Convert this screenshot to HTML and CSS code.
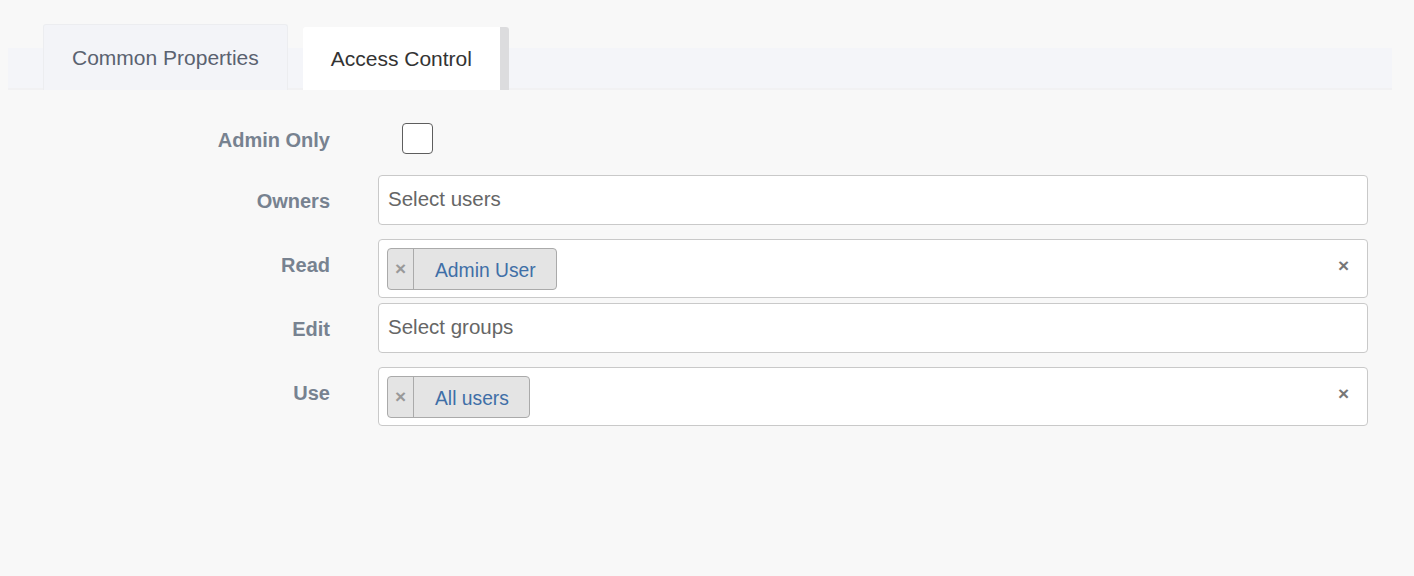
FILE: index.html
```html
<!DOCTYPE html>
<html lang="en">
<head>
<meta charset="utf-8">
<title>Access Control</title>
<link rel="stylesheet" href="styles.css">
</head>
<body>
<div class="page">
  <nav class="tabs">
    <a class="tab">Common Properties</a>
    <a class="tab tab-active">Access Control</a>
  </nav>

  <form class="form">
    <div class="row row-check">
      <label class="label">Admin Only</label>
      <div class="field"><span class="checkbox"></span></div>
    </div>

    <div class="row">
      <label class="label">Owners</label>
      <div class="field"><div class="select"><span class="placeholder">Select users</span></div></div>
    </div>

    <div class="row">
      <label class="label">Read</label>
      <div class="field">
        <div class="select select-multi">
          <span class="tag"><span class="tag-remove">×</span><span class="tag-text">Admin User</span></span>
          <span class="clear">×</span>
        </div>
      </div>
    </div>

    <div class="row">
      <label class="label">Edit</label>
      <div class="field"><div class="select"><span class="placeholder">Select groups</span></div></div>
    </div>

    <div class="row">
      <label class="label">Use</label>
      <div class="field">
        <div class="select select-multi">
          <span class="tag"><span class="tag-remove">×</span><span class="tag-text">All users</span></span>
          <span class="clear">×</span>
        </div>
      </div>
    </div>
  </form>
</div>
</body>
</html>
```

FILE: styles.css
```css
html, body {
  margin: 0;
  padding: 0;
  background: #f8f8f8;
  font-family: "Liberation Sans", Arial, Helvetica, sans-serif;
}

.page {
  width: 1414px;
  height: 576px;
}

/* tab strip */
.tabs {
  display: flex;
  align-items: flex-end;
  gap: 15px;
  margin: 0 22px 0 8px;
  padding: 24px 0 0 35px;
  height: 66px;
  background: linear-gradient(to bottom, transparent 0, transparent 48px, #f4f5f9 48px, #f4f5f9 88px, #f1f1f3 88px);
}

.tab {
  display: flex;
  align-items: center;
  box-sizing: border-box;
  height: 66px;
  padding: 0 28px 0 28px;
  font-size: 21px;
  color: #5a6270;
  background: #f3f4f8;
  border: 1px solid #ecedf0;
  border-bottom: 0;
  border-radius: 3px 3px 0 0;
}

.tab-active {
  height: 63px;
  padding: 0 28px 0 28px;
  color: #333;
  background: #fff;
  border: 0;
  border-right: 9px solid #dcdcde;
  margin-right: -9px;
}

/* form rows */
.form {
  padding-top: 23px;
}

.row {
  display: grid;
  grid-template-columns: 330px 990px;
  column-gap: 48px;
  min-height: 64px;
  align-items: start;
}

.row-check {
  min-height: 54px;
  margin-bottom: 8px;
}

.label {
  display: block;
  text-align: right;
  font-size: 20px;
  font-weight: bold;
  color: #778290;
  line-height: 52px;
}

.row-check .label {
  line-height: 54px;
}

.checkbox {
  display: block;
  margin: 10px 0 0 24px;
  width: 29px;
  height: 29px;
  border: 1px solid #5e5e5e;
  border-radius: 4px;
  background: #fff;
}

.select {
  box-sizing: border-box;
  display: flex;
  align-items: center;
  height: 50px;
  padding: 0 9px;
  background: #fff;
  border: 1px solid #c9c9c9;
  border-radius: 4px;
}

.select-multi {
  height: 59px;
  padding: 0 8px;
}

.placeholder {
  font-size: 20.5px;
  color: #666;
  margin-top: -2px;
}

.tag {
  display: flex;
  align-items: stretch;
  box-sizing: border-box;
  height: 42px;
  background: #e4e4e4;
  border: 1px solid #aaa;
  border-radius: 4px;
}

.tag-remove {
  display: flex;
  align-items: center;
  justify-content: center;
  width: 25px;
  border-right: 1px solid #aaa;
  color: #999;
  font-size: 19px;
  font-weight: bold;
}

.tag-text {
  display: flex;
  align-items: center;
  padding: 5px 20px 0 21px;
  font-size: 19.3px;
  color: #3f6fa7;
}

.clear {
  margin-left: auto;
  margin-right: 10px;
  margin-top: -6px;
  color: #777;
  font-size: 19px;
  font-weight: bold;
}
```
